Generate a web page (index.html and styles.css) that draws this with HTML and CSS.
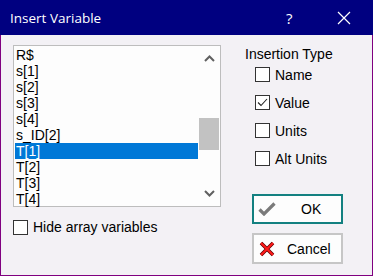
FILE: index.html
```html
<!DOCTYPE html>
<html>
<head>
<meta charset="utf-8">
<link rel="stylesheet" href="styles.css">
</head>
<body>
<div class="window">
  <div class="titlebar">
    <span class="title">Insert Variable</span>
    <span class="help">?</span>
    <span class="close">
      <svg width="14" height="14" viewBox="0 0 14 14"><path d="M1 1L13 13M13 1L1 13" stroke="#fff" stroke-width="1.2" fill="none"/></svg>
    </span>
  </div>
  <div class="content">
    <div class="left">
      <div class="listbox">
        <div class="items">
          <div class="item">R$</div>
          <div class="item">s[1]</div>
          <div class="item">s[2]</div>
          <div class="item">s[3]</div>
          <div class="item">s[4]</div>
          <div class="item">s_ID[2]</div>
          <div class="item selected">T[1]</div>
          <div class="item">T[2]</div>
          <div class="item">T[3]</div>
          <div class="item">T[4]</div>
        </div>
        <div class="scrollbar">
          <svg class="arrow" width="11" height="7" viewBox="0 0 11 7"><path d="M1 6L5.5 1.5L10 6" stroke="#606060" stroke-width="2" fill="none"/></svg>
          <div class="track"><div class="thumb"></div></div>
          <svg class="arrow" width="11" height="7" viewBox="0 0 11 7"><path d="M1 1L5.5 5.5L10 1" stroke="#606060" stroke-width="2" fill="none"/></svg>
        </div>
      </div>
      <div class="check hide">
        <span class="box"></span>
        <span class="label">Hide array variables</span>
      </div>
    </div>
    <div class="right">
      <div class="group-title">Insertion Type</div>
      <div class="types">
        <div class="check"><span class="box"></span><span class="label">Name</span></div>
        <div class="check"><span class="box"><svg width="13" height="13" viewBox="0 0 13 13"><path d="M2 6.5L5 9.5L11 3" stroke="#222" stroke-width="1.1" fill="none"/></svg></span><span class="label">Value</span></div>
        <div class="check"><span class="box"></span><span class="label">Units</span></div>
        <div class="check"><span class="box"></span><span class="label">Alt Units</span></div>
      </div>
      <div class="buttons">
        <div class="btn ok">
          <svg class="icon" width="18" height="14" viewBox="0 0 18 14"><path d="M1.5 7.5L6 12L16.5 1.5" stroke="#7a7a7a" stroke-width="3.2" fill="none"/></svg>
          <span class="btn-label">OK</span>
        </div>
        <div class="btn cancel">
          <svg class="icon" width="16" height="16" viewBox="0 0 16 16"><path d="M2 2L14 14M14 2L2 14" stroke="#600" stroke-width="3.6" fill="none"/><path d="M2 2L14 14M14 2L2 14" stroke="#ff1a1a" stroke-width="2" fill="none"/></svg>
          <span class="btn-label">Cancel</span>
        </div>
      </div>
    </div>
  </div>
</div>
</body>
</html>
```

FILE: styles.css
```css
html, body {
  margin: 0;
  padding: 0;
}
body {
  width: 373px;
  height: 276px;
  overflow: hidden;
  font-family: "Liberation Sans", Arial, sans-serif;
}
.window {
  width: 373px;
  height: 276px;
  box-sizing: border-box;
  background: #f3f1f5;
  border: 1px solid #800080;
  border-top: none;
  display: flex;
  flex-direction: column;
}
.titlebar {
  height: 35px;
  background: #000080;
  color: #fff;
  display: flex;
  align-items: center;
  margin: 0 -1px;
  padding-left: 10px;
  flex-shrink: 0;
}
.title {
  font-family: "Open Sans", "Noto Sans", sans-serif;
  font-size: 13.5px;
  flex: 1;
}
.help {
  font-family: "Open Sans", "Noto Sans", sans-serif;
  font-size: 15px;
  width: 14px;
  margin-right: 37px;
}
.close {
  display: flex;
  margin-right: 22px;
}
.content {
  display: flex;
  flex: 1;
  padding-left: 12px;
}
.left {
  display: flex;
  flex-direction: column;
  width: 208px;
}
.listbox {
  margin-top: 10px;
  width: 208px;
  height: 162px;
  box-sizing: border-box;
  border: 1px solid #bdbdbd;
  background: #fdfdfd;
  display: flex;
  padding: 1px;
}
.items {
  width: 183px;
  font-size: 14px;
  color: #000;
}
.item {
  height: 16px;
  line-height: 16px;
  padding-left: 1px;
}
.item.selected {
  background: #0078d7;
  color: #fff;
}
.scrollbar {
  width: 20px;
  margin-left: 1px;
  display: flex;
  flex-direction: column;
  align-items: center;
}
.scrollbar .arrow {
  margin: 8px 0;
}
.track {
  flex: 1;
  width: 20px;
  position: relative;
}
.thumb {
  position: absolute;
  left: 0;
  top: 48px;
  width: 20px;
  height: 32px;
  background: #c2c2c2;
}
.check {
  display: flex;
  align-items: center;
  font-size: 14px;
}
.box {
  width: 13px;
  height: 13px;
  border: 1px solid #333;
  background: #fff;
  display: flex;
  align-items: center;
  justify-content: center;
  flex-shrink: 0;
}
.check .label {
  margin-left: 5px;
}
.hide {
  margin-top: 12px;
}
.right {
  margin-left: 24px;
  display: flex;
  flex-direction: column;
  width: 110px;
}
.group-title {
  margin-top: 11px;
  font-size: 14px;
  line-height: 16px;
}
.types {
  display: flex;
  flex-direction: column;
  gap: 13px;
  margin-top: 5px;
  padding-left: 10px;
}
.types .check {
  height: 15px;
}
.buttons {
  display: flex;
  flex-direction: column;
  gap: 9px;
  margin-top: 28px;
  margin-left: 7px;
}
.btn {
  width: 91px;
  height: 30px;
  box-sizing: border-box;
  background: #fdfdfd;
  display: flex;
  align-items: center;
  font-size: 14px;
}
.btn.ok {
  border: 2px solid #138080;
}
.btn.cancel {
  border: 2px solid #c6c6c6;
  height: 31px;
}
.btn .icon {
  margin-left: 4px;
}
.btn.ok .btn-label {
  margin-left: 25px;
}
.btn.cancel .icon {
  margin-left: 5px;
}
.btn.cancel .btn-label {
  margin-left: 12px;
}
```
